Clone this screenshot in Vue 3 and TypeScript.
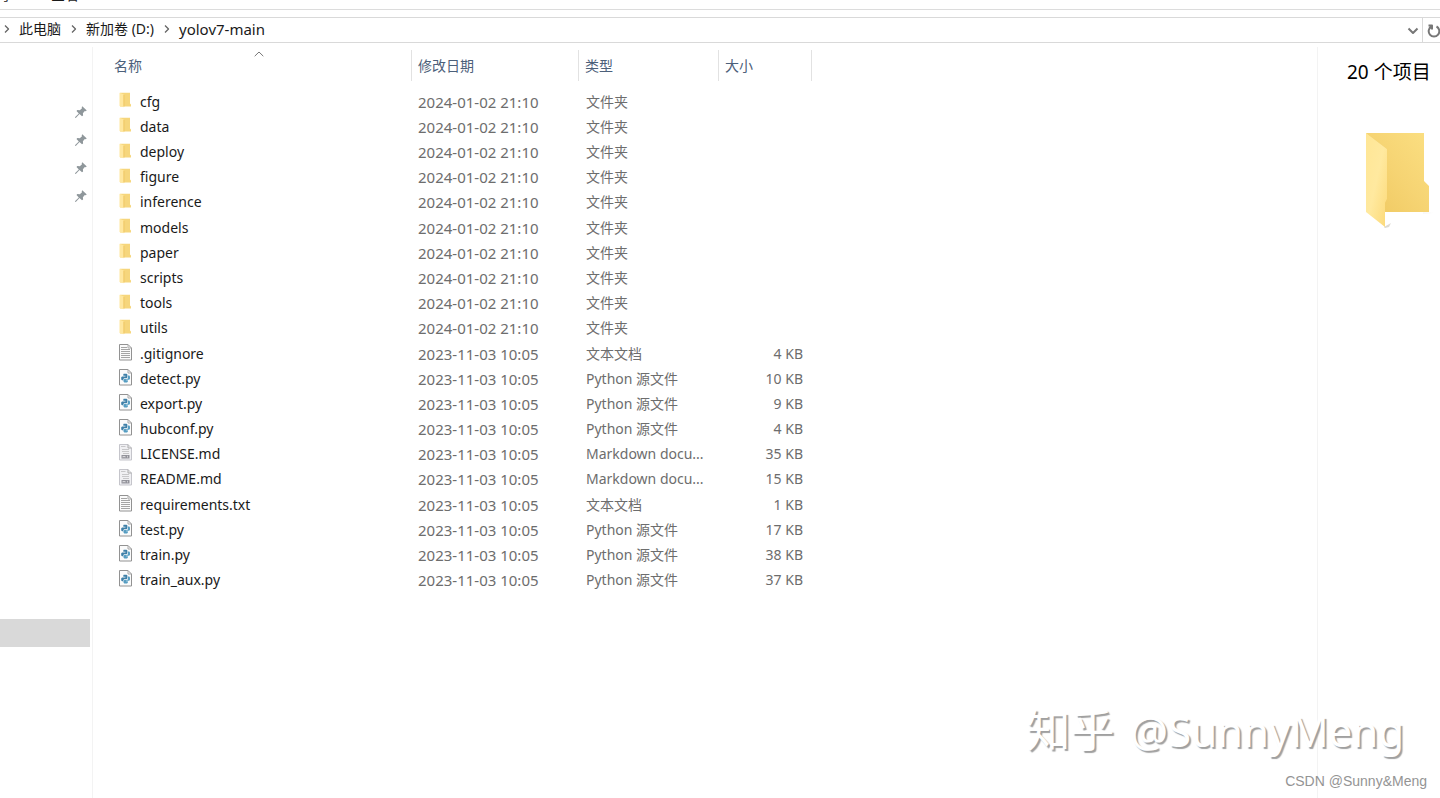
<script setup lang="ts">
type Kind = 'folder' | 'text' | 'python' | 'markdown'

interface Entry {
  name: string
  date: string
  kind: Kind
  size?: string
}

const typeLabels: Record<Kind, string> = {
  folder: '文件夹',
  text: '文本文档',
  python: 'Python 源文件',
  markdown: 'Markdown docu...',
}

const folderNames = ['cfg', 'data', 'deploy', 'figure', 'inference', 'models', 'paper', 'scripts', 'tools', 'utils']

const files: [string, Kind, string][] = [
  ['.gitignore', 'text', '4 KB'],
  ['detect.py', 'python', '10 KB'],
  ['export.py', 'python', '9 KB'],
  ['hubconf.py', 'python', '4 KB'],
  ['LICENSE.md', 'markdown', '35 KB'],
  ['README.md', 'markdown', '15 KB'],
  ['requirements.txt', 'text', '1 KB'],
  ['test.py', 'python', '17 KB'],
  ['train.py', 'python', '38 KB'],
  ['train_aux.py', 'python', '37 KB'],
]

const entries: Entry[] = [
  ...folderNames.map((name): Entry => ({ name, date: '2024-01-02 21:10', kind: 'folder' })),
  ...files.map(([name, kind, size]): Entry => ({ name, date: '2023-11-03 10:05', kind, size })),
]

const crumbs = ['此电脑', '新加卷 (D:)', 'yolov7-main']
</script>

<template>
  <div class="explorer">
    <div class="ribbon">
      <button class="tab" type="button">享</button>
      <button class="tab" type="button">查看</button>
    </div>

    <nav class="address">
      <div class="crumbs">
        <template v-for="crumb in crumbs" :key="crumb">
          <svg class="sep" viewBox="0 0 6 10" aria-hidden="true"><path d="M1 1.5 4.5 5 1 8.5" /></svg>
          <button class="crumb" type="button">{{ crumb }}</button>
        </template>
      </div>
      <button class="tool" type="button" aria-label="历史记录">
        <svg width="12" height="8" viewBox="0 0 12 8"><path d="M1.5 1.5 6 6l4.500-4.500" /></svg>
      </button>
      <button class="tool refresh" type="button" aria-label="刷新">
        <svg width="14" height="14" viewBox="0 0 14 14"><path d="M9.500 2.500a5.300 5.300 0 1 1-5 0M1.500 1.500h3.500v4" /></svg>
      </button>
    </nav>

    <main class="body">
      <aside class="sidebar">
        <div v-for="n in 4" :key="n" class="pinned">
          <svg width="14" height="14" viewBox="0 0 14 14" aria-hidden="true">
            <path class="pin" d="M8.300 1.200 12.800 5.600 11.500 6.300 10.800 6 8.900 8.200 9.100 10.600 8 11.300 5.500 9 2 12.800 1 13 1.200 12 4.800 8.400 2.500 6 3.300 5.100 5.800 5.200 8 3.300 7.700 2.300Z" />
          </svg>
        </div>
        <div class="selected"></div>
      </aside>

      <section class="content">
        <table class="files">
          <colgroup>
            <col class="c-name" />
            <col class="c-date" />
            <col class="c-type" />
            <col class="c-size" />
          </colgroup>
          <thead>
            <tr>
              <th class="first" scope="col">
                <button type="button">名称</button>
                <svg class="caret" width="10" height="6" viewBox="0 0 10 6" aria-hidden="true"><path d="M.7 5.200 5 1l4.300 4.200" /></svg>
              </th>
              <th scope="col"><button type="button">修改日期</button></th>
              <th scope="col"><button type="button">类型</button></th>
              <th scope="col"><button type="button">大小</button></th>
            </tr>
          </thead>
          <tbody>
            <tr v-for="e in entries" :key="e.name">
              <td>
                <div class="name">
                  <svg v-if="e.kind === 'folder'" width="14" height="16" viewBox="0 0 14 16" aria-hidden="true">
                    <path fill="#f6d67c" d="M2 .8H12v10.700l1 1v2H2Z" />
                    <path fill="#ffe79f" d="M1.500.8 5.500 2.300v13L1.500 14Z" />
                    <path fill="#efc766" d="M5.500 3h1v11.500h-1Z" />
                  </svg>
                  <svg v-else width="14" height="17" viewBox="0 0 14 17" aria-hidden="true">
                    <path class="sheet" :class="{ pale: e.kind === 'markdown' }" d="M1.500.500h8.500l3.500 3.500v12H1.500Z" />
                    <path class="fold" d="M10 .5V4h3.500" />
                    <path v-if="e.kind === 'text'" class="lines" d="M3 3.500H9M3 5.500h9M3 7.500h9M3 9.500h9M3 11.500h9M3 13.500h9" />
                    <g v-else-if="e.kind === 'python'" transform="translate(1.500 1.500) scale(.85)">
                      <path fill="#3f80a8" d="M5 3.800h3.300l1 1v3.400L8.300 9H5.500l-1 1v1.500H3l-1-1V8l1-1h4v-.7H4.500V4.300Z" />
                      <path fill="#559dc2" d="M10 6h1.500l.8 1v3l-1 1H7.500v.6h2.300v1.600l-1 .8H5.700l-1-1v-2l1-.9h3.200l1.100-1Z" />
                    </g>
                    <template v-else>
                      <path class="lines" d="M3 2.500H7.500M4 5.500h7M4 7.500h7M5 9.500h6" opacity=".55" />
                      <path fill="#92929a" d="M3.500 11h8v3.500h-8Z" />
                      <path stroke="#e6e6ea" fill="none" d="M5 13.500v-1.500l1 1 1-1v1.500M9.500 11.800v1.700" stroke-width=".7" />
                    </template>
                  </svg>
                  <span>{{ e.name }}</span>
                </div>
              </td>
              <td class="date">{{ e.date }}</td>
              <td class="type">{{ typeLabels[e.kind] }}</td>
              <td class="size">{{ e.size }}</td>
            </tr>
          </tbody>
        </table>
      </section>

      <aside class="preview">
        <h1>20 个项目</h1>
        <svg width="72" height="98" viewBox="0 0 72 98" aria-hidden="true">
          <defs>
            <linearGradient id="back" x1="0" y1="1" x2="1" y2="0">
              <stop offset="0" stop-color="#efc860" />
              <stop offset=".5" stop-color="#f6d473" />
              <stop offset="1" stop-color="#fbdf82" />
            </linearGradient>
            <linearGradient id="front" x1="0" y1="0" x2="1" y2="1">
              <stop offset="0" stop-color="#ffe695" />
              <stop offset=".5" stop-color="#ffe99f" />
              <stop offset="1" stop-color="#fcd978" />
            </linearGradient>
            <linearGradient id="shade" x1="0" x2="1">
              <stop offset="0" stop-color="#c9c3b4" stop-opacity=".7" />
              <stop offset="1" stop-color="#ddd" stop-opacity="0" />
            </linearGradient>
          </defs>
          <path fill="url(#shade)" d="M58 80h12l-4 2H58ZM19 95l7-4-2 4-4 1Z" />
          <path fill="url(#back)" d="M1 1h58v48l5 5v26H19Z" />
          <path fill="#e6bd58" d="M1 1 22 17v50l-2 4V18Z" opacity=".6" />
          <path fill="url(#front)" d="M1 1 22 17v50l-2 4v24L1 80Z" />
        </svg>
      </aside>
    </main>

    <div class="mark zhihu"><span class="brand">知乎</span><span>@SunnyMeng</span></div>
    <div class="mark csdn">CSDN @Sunny&amp;Meng</div>
  </div>
</template>

<style>
body {
  margin: 0;
  background: #fff;
}
</style>

<style scoped>
.explorer {
  position: relative;
  display: flex;
  flex-direction: column;
  min-height: 100vh;
  overflow: hidden;
  color: #1a1a1a;
  font: 14px/20px "Noto Sans", "Noto Sans CJK SC", sans-serif;
}

button {
  padding: 0;
  border: 0;
  background: none;
  color: inherit;
  font: inherit;
}

.ribbon {
  display: flex;
  align-items: flex-end;
  gap: 37px;
  height: 9px;
  overflow: hidden;
  border-bottom: 1px solid #dcdcdc;
}

.tab {
  height: 20px;
  margin-bottom: 4px;
}

.address {
  display: flex;
  height: 24px;
  margin-top: 7px;
  border: solid #d9d9d9;
  border-width: 1px 0;
}

.crumbs {
  display: flex;
  flex: 1;
  align-items: center;
  gap: 9px;
  padding: 0 0 2px 4px;
}

.crumb:last-child {
  font-size: 15px;
}

.sep {
  width: 6px;
  height: 10px;
}

.sep:not(:first-child) {
  margin-left: 1px;
}

svg path {
  stroke-linejoin: round;
}

.sep path,
.tool path {
  fill: none;
  stroke: #666;
  stroke-width: 1.3;
}

.tool {
  display: flex;
  align-items: center;
  justify-content: center;
  width: 18px;
  padding-top: 2px;
}

.tool path {
  stroke: #777;
  stroke-width: 2;
}

.refresh {
  border-left: 1px solid #d9d9d9;
}

.refresh svg {
  flex: none;
  margin-left: 4px;
}

.body {
  display: flex;
  flex: 1;
}

.sidebar {
  flex: none;
  width: 92px;
  margin-top: 4px;
  padding-top: 51px;
  border-right: 1px solid #f3f3f3;
}

.pinned {
  display: flex;
  align-items: center;
  justify-content: flex-end;
  height: 28px;
  padding-right: 4px;
}

.pin {
  fill: #8f979b;
}

.selected {
  height: 28px;
  margin: 409px 2px 0 0;
  background: #d9d9d9;
}

.content {
  flex: 1;
}

.files {
  width: 719px;
  height: 543px;
  margin-top: 7px;
  border-collapse: collapse;
  table-layout: fixed;
}

.c-name {
  width: 319px;
}

.c-date {
  width: 167px;
}

.c-type {
  width: 140px;
}

.c-size {
  width: 93px;
}

th {
  position: relative;
  height: 31px;
  padding: 0 0 0 6px;
  background: linear-gradient(#e2e2e2, #e2e2e2) right / 1px 100% no-repeat;
  color: #4c607a;
  font-weight: 400;
  text-align: left;
}

th.first {
  padding-left: 21px;
}

.caret {
  position: absolute;
  top: 1px;
  left: 161px;
}

.caret path,
.fold {
  fill: none;
  stroke: #777;
}

tbody::before {
  display: table-row;
  height: 8px;
  content: "";
}

td {
  height: 25px;
  padding: 0 0 0 6px;
  overflow: hidden;
  color: #6d6d6d;
  white-space: nowrap;
}

td:first-child {
  padding-left: 25px;
}

.name {
  display: flex;
  align-items: center;
  gap: 8px;
  color: #1a1a1a;
}

.name svg {
  flex: none;
  margin-bottom: 3px;
}

.date {
  font-size: 15px;
}

.type {
  padding-left: 7px;
}

td.size {
  padding: 0 9px 0 0;
  text-align: right;
}

.sheet {
  fill: #fbfbfb;
  stroke: #929292;
}

.pale {
  fill: #f0f0f3;
  stroke: #c5c5cb;
}

.fold {
  stroke: #aaa;
}

.lines {
  fill: none;
  stroke: #a5a5a5;
}

.preview {
  flex: none;
  width: 122px;
  margin-top: 4px;
  border-left: 1px solid #f3f3f3;
}

.preview h1 {
  margin: 11px 0 0 29px;
  color: #000;
  font-size: 19px;
  font-weight: 400;
  line-height: 28px;
  white-space: nowrap;
}

.preview svg {
  display: block;
  margin: 46px 0 0 47px;
}

.mark {
  position: absolute;
  white-space: nowrap;
}

.zhihu {
  display: flex;
  align-items: baseline;
  gap: 16px;
  right: 36px;
  bottom: 37px;
  color: #fff;
  font-size: 42px;
  line-height: 60px;
  text-shadow: 2px 2px 1px #a0a0a0;
}

.brand {
  font-size: 44px;
}

.csdn {
  right: 13px;
  bottom: 7px;
  color: #949494;
  font-family: "Liberation Sans", Arial, sans-serif;
}
</style>
